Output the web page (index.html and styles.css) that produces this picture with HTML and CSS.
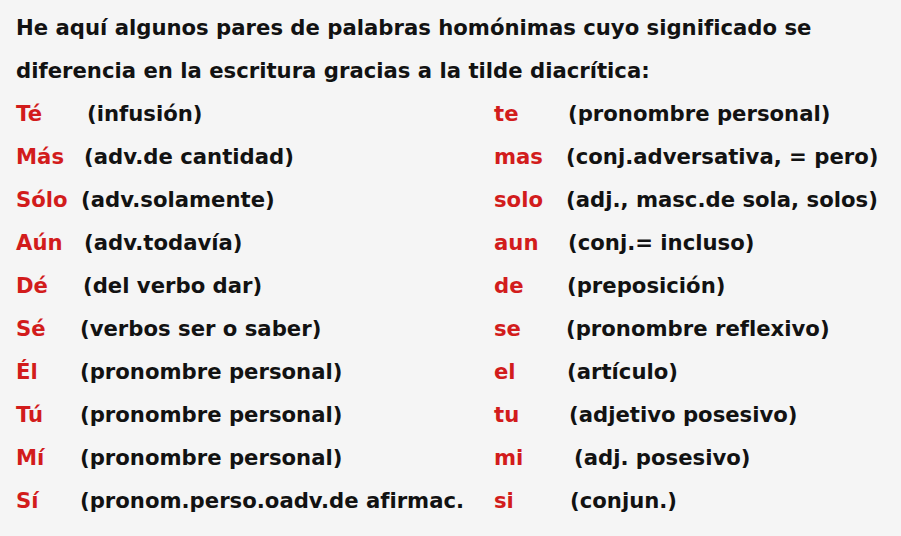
FILE: index.html
```html
<!DOCTYPE html>
<html lang="es">
<head>
<meta charset="utf-8">
<title>Tilde diacrítica</title>
<link rel="stylesheet" href="styles.css">
</head>
<body>
<main class="sheet">
  <p class="intro">He aquí algunos pares de palabras homónimas cuyo significado se</p>
  <p class="intro">diferencia en la escritura gracias a la tilde diacrítica:</p>
  <div class="pairs">
    <div class="row">
      <span class="w">Té</span><span class="d p7">(infusión)</span>
      <span class="w">te</span><span class="d p2">(pronombre personal)</span>
    </div>
    <div class="row">
      <span class="w">Más</span><span class="d p4">(adv.de cantidad)</span>
      <span class="w">mas</span><span class="d">(conj.adversativa, = pero)</span>
    </div>
    <div class="row">
      <span class="w">Sólo</span><span class="d p1">(adv.solamente)</span>
      <span class="w">solo</span><span class="d">(adj., masc.de sola, solos)</span>
    </div>
    <div class="row">
      <span class="w">Aún</span><span class="d p4">(adv.todavía)</span>
      <span class="w">aun</span><span class="d p2">(conj.= incluso)</span>
    </div>
    <div class="row">
      <span class="w">Dé</span><span class="d p3">(del verbo dar)</span>
      <span class="w">de</span><span class="d p1">(preposición)</span>
    </div>
    <div class="row">
      <span class="w">Sé</span><span class="d">(verbos ser o saber)</span>
      <span class="w">se</span><span class="d">(pronombre reflexivo)</span>
    </div>
    <div class="row">
      <span class="w">Él</span><span class="d">(pronombre personal)</span>
      <span class="w">el</span><span class="d p1">(artículo)</span>
    </div>
    <div class="row">
      <span class="w">Tú</span><span class="d">(pronombre personal)</span>
      <span class="w">tu</span><span class="d p3">(adjetivo posesivo)</span>
    </div>
    <div class="row">
      <span class="w">Mí</span><span class="d">(pronombre personal)</span>
      <span class="w">mi</span><span class="d p8">(adj. posesivo)</span>
    </div>
    <div class="row">
      <span class="w">Sí</span><span class="d">(pronom.perso.oadv.de afirmac.</span>
      <span class="w">si</span><span class="d p4">(conjun.)</span>
    </div>
  </div>
</main>
</body>
</html>
```

FILE: styles.css
```css
html, body {
  margin: 0;
  padding: 0;
  background: #f5f5f5;
}

.sheet {
  padding: 6px 0 0 16px;
  font-family: "DejaVu Sans", Verdana, sans-serif;
  font-weight: bold;
  font-size: 21.2px;
  line-height: 43px;
  color: #121212;
}

.intro {
  margin: 0;
  white-space: nowrap;
}

.pairs {
  display: flex;
  flex-direction: column;
}

.row {
  display: grid;
  grid-template-columns: 64px 414px 72px 1fr;
  white-space: nowrap;
}

.w {
  color: #d21c1c;
}

.p1 { padding-left: 1px; }
.p2 { padding-left: 2px; }
.p3 { padding-left: 3px; }
.p4 { padding-left: 4px; }
.p7 { padding-left: 7px; }
.p8 { padding-left: 8px; }
```
